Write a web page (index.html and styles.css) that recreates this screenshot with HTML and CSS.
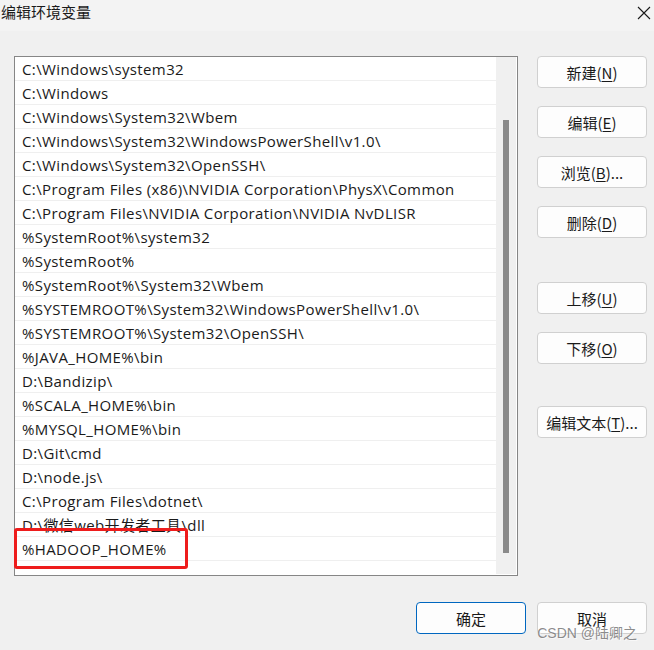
FILE: index.html
```html
<!DOCTYPE html>
<html lang="zh-CN">
<head>
    <meta charset="UTF-8">
    <title>编辑环境变量</title>
    <link rel="stylesheet" href="styles.css">
</head>
<body>
    <div class="dialog">
        <div class="dialog__titlebar">
            <span class="dialog__title">编辑环境变量</span>
            <svg class="dialog__close" width="14" height="14" viewBox="0 0 14 14">
                <path d="M1 1 L13 13 M13 1 L1 13" stroke="#1a1a1a" stroke-width="1.1" fill="none"/>
            </svg>
        </div>

        <div class="dialog__body">
            <div class="dialog__main">
                <div class="pathlist">
                    <ul class="pathlist__items">
                        <li class="pathlist__item">C:\Windows\system32</li>
                        <li class="pathlist__item">C:\Windows</li>
                        <li class="pathlist__item">C:\Windows\System32\Wbem</li>
                        <li class="pathlist__item">C:\Windows\System32\WindowsPowerShell\v1.0\</li>
                        <li class="pathlist__item">C:\Windows\System32\OpenSSH\</li>
                        <li class="pathlist__item">C:\Program Files (x86)\NVIDIA Corporation\PhysX\Common</li>
                        <li class="pathlist__item">C:\Program Files\NVIDIA Corporation\NVIDIA NvDLISR</li>
                        <li class="pathlist__item">%SystemRoot%\system32</li>
                        <li class="pathlist__item">%SystemRoot%</li>
                        <li class="pathlist__item">%SystemRoot%\System32\Wbem</li>
                        <li class="pathlist__item">%SYSTEMROOT%\System32\WindowsPowerShell\v1.0\</li>
                        <li class="pathlist__item">%SYSTEMROOT%\System32\OpenSSH\</li>
                        <li class="pathlist__item">%JAVA_HOME%\bin</li>
                        <li class="pathlist__item">D:\Bandizip\</li>
                        <li class="pathlist__item">%SCALA_HOME%\bin</li>
                        <li class="pathlist__item">%MYSQL_HOME%\bin</li>
                        <li class="pathlist__item">D:\Git\cmd</li>
                        <li class="pathlist__item">D:\node.js\</li>
                        <li class="pathlist__item">C:\Program Files\dotnet\</li>
                        <li class="pathlist__item">D:\微信web开发者工具\dll</li>
                        <li class="pathlist__item">%HADOOP_HOME%</li>
                    </ul>
                    <div class="pathlist__scrollbar">
                        <div class="pathlist__thumb"></div>
                    </div>
                    <!-- marca vermelha por cima da última linha -->
                    <div class="pathlist__highlight"></div>
                </div>

                <div class="actions">
                    <button class="btn">新建(<u>N</u>)</button>
                    <button class="btn">编辑(<u>E</u>)</button>
                    <button class="btn">浏览(<u>B</u>)...</button>
                    <button class="btn">删除(<u>D</u>)</button>
                    <button class="btn actions__gap">上移(<u>U</u>)</button>
                    <button class="btn">下移(<u>O</u>)</button>
                    <button class="btn actions__gap--large">编辑文本(<u>T</u>)...</button>
                </div>
            </div>

            <div class="dialog__footer">
                <button class="btn btn--primary">确定</button>
                <button class="btn">取消</button>
                <span class="watermark">CSDN @陆卿之</span>
            </div>
        </div>
    </div>
</body>
</html>
```

FILE: styles.css
```css
* {
    box-sizing: border-box;
}

body {
    margin: 0;
    background: #f0f0f0;
    font-family: "Open Sans", "Noto Sans CJK SC", sans-serif;
    color: #1a1a1a;
}

.dialog {
    width: 654px;
    height: 650px;
    display: flex;
    flex-direction: column;
}

.dialog__titlebar {
    height: 31px;
    background: #f3f3f3;
    display: flex;
    justify-content: space-between;
    align-items: flex-start;
    padding: 2px 3px 0 1px;
}

.dialog__title {
    font-family: "Noto Sans CJK SC", sans-serif;
    font-size: 15px;
    line-height: 20px;
    color: #1a1a1a;
}

.dialog__close {
    margin-top: 4px;
}

.dialog__body {
    flex: 1;
    padding: 25px 7px 0 14px;
    position: relative;
}

.dialog__main {
    display: flex;
    gap: 19px;
}

.pathlist {
    position: relative;
    width: 504px;
    height: 520px;
    border: 1px solid #868686;
    background: #fff;
    display: flex;
}

.pathlist__items {
    list-style: none;
    margin: 0;
    padding: 0;
    flex: 1;
    min-width: 0;
}

.pathlist__item {
    height: 24px;
    line-height: 21px;
    padding: 2px 0 0 7px;
    border-bottom: 1px solid #efefef;
    font-size: 15px;
    letter-spacing: 0.38px;
    white-space: nowrap;
    overflow: hidden;
}

.pathlist__scrollbar {
    width: 20px;
    flex-shrink: 0;
    margin: 0 1px 1px 0;
    background: #f0f0f0;
    padding: 63px 0 0 7px;
}

.pathlist__thumb {
    width: 6px;
    height: 433px;
    background: #8a8a8a;
}

.pathlist__highlight {
    position: absolute;
    left: -1px;
    top: 471px;
    width: 174px;
    height: 41px;
    border: 3px solid #ee1c1c;
    border-radius: 3px;
}

.actions {
    display: flex;
    flex-direction: column;
    gap: 18px;
}

.actions__gap {
    margin-top: 26px;
}

.actions__gap--large {
    margin-top: 24px;
}

.btn {
    width: 110px;
    height: 32px;
    background: #fdfdfd;
    border: 1px solid #d0d0d0;
    border-radius: 4px;
    font-family: "Noto Sans CJK SC", sans-serif;
    font-size: 15px;
    color: #1a1a1a;
    padding: 0;
}

.btn u {
    text-underline-offset: 2px;
}

.btn--primary {
    border-color: #0067c0;
}

.dialog__footer {
    display: flex;
    justify-content: flex-end;
    gap: 11px;
    margin-top: 26px;
}

.watermark {
    position: absolute;
    right: 17px;
    bottom: 8px;
    font-family: "Liberation Sans", "Noto Sans CJK SC", sans-serif;
    font-size: 14px;
    color: rgba(120, 120, 120, 0.85);
    text-shadow: 1px 1px 0 rgba(255, 255, 255, 0.6);
    pointer-events: none;
}
```
